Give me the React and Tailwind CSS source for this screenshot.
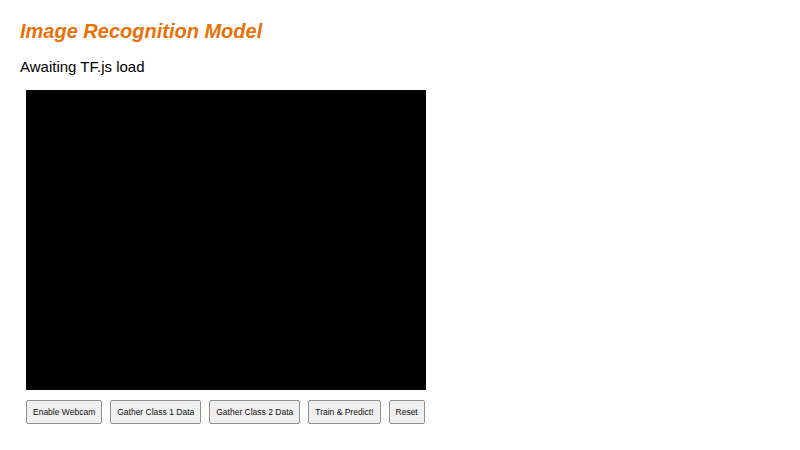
import React from 'react';

const buttons = ['Enable Webcam', 'Gather Class 1 Data', 'Gather Class 2 Data', 'Train & Predict!', 'Reset'];

export default function App() {
  return (
    <div className="min-h-[450px] bg-white px-5 pt-[18px] font-['Liberation_Sans',Arial,sans-serif] text-black">
      <h1 className="text-[20px] font-bold italic leading-[26px] text-[#e8710a]">Image Recognition Model</h1>
      <p className="mt-[13px] text-[15px] leading-[20px]">Awaiting TF.js load</p>
      <div className="ml-[6px] mt-[13px] h-[300px] w-[400px] bg-black" />
      <div className="ml-[6px] mt-[10px] flex gap-2">
        {buttons.map((b) => (
          <button
            key={b}
            className="h-[24px] rounded-[2px] border border-[#8f8f8f] bg-[#efefef] px-[6px] text-[8.5px] leading-none text-[#111]"
          >
            {b}
          </button>
        ))}
      </div>
    </div>
  );
}
